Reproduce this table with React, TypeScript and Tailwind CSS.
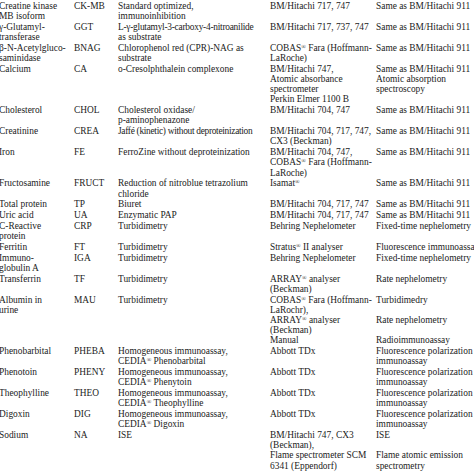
const R = () => <span className="text-[6px] align-top leading-none relative top-[1px]">®</span>;

type Cell = (string | JSX.Element)[];
type Row = [Cell, Cell, Cell, Cell, Cell];

const fp: Cell = ["Fluorescence polarization", "immunoassay"];
const same: Cell = ["Same as BM/Hitachi 911"];

const rows: Row[] = [
  [["Creatine kinase", "MB isoform"], ["CK-MB"], ["Standard optimized,", "immunoinhibition"], ["BM/Hitachi 717, 747"], same],
  [["γ-Glutamyl-", "transferase"], ["GGT"], [<span className="tracking-[-0.25px]">L-γ-glutamyl-3-carboxy-4-nitroanilide</span>, "as substrate"], ["BM/Hitachi 717, 737, 747"], same],
  [["β-N-Acetylgluco-", "saminidase"], ["BNAG"], ["Chlorophenol red (CPR)-NAG as", "substrate"], [<>COBAS<R /> Fara (Hoffmann-</>, "LaRoche)"], same],
  [["Calcium"], ["CA"], ["o-Cresolphthalein complexone"], ["BM/Hitachi 747,", "Atomic absorbance", "spectrometer", "Perkin Elmer 1100 B"], ["Same as BM/Hitachi 911", "Atomic absorption", "spectroscopy"]],
  [["Cholesterol"], ["CHOL"], ["Cholesterol oxidase/", "p-aminophenazone"], ["BM/Hitachi 704, 747"], same],
  [["Creatinine"], ["CREA"], [<span className="tracking-[-0.3px]">Jaffé (kinetic) without deproteinization</span>], ["BM/Hitachi 704, 717, 747,", "CX3 (Beckman)"], same],
  [["Iron"], ["FE"], ["FerroZine without deproteinization"], ["BM/Hitachi 704, 747,", <>COBAS<R /> Fara (Hoffmann-</>, "LaRoche)"], same],
  [["Fructosamine"], ["FRUCT"], ["Reduction of nitroblue tetrazolium", "chloride"], [<>Isamat<R /></>], same],
  [["Total protein"], ["TP"], ["Biuret"], ["BM/Hitachi 704, 717, 747"], same],
  [["Uric acid"], ["UA"], ["Enzymatic PAP"], ["BM/Hitachi 704, 717, 747"], same],
  [["C-Reactive", "protein"], ["CRP"], ["Turbidimetry"], ["Behring Nephelometer"], ["Fixed-time nephelometry"]],
  [["Ferritin"], ["FT"], ["Turbidimetry"], [<>Stratus<R /> II analyser</>], ["Fluorescence immunoassay"]],
  [["Immuno-", "globulin A"], ["IGA"], ["Turbidimetry"], ["Behring Nephelometer"], ["Fixed-time nephelometry"]],
  [["Transferrin"], ["TF"], ["Turbidimetry"], [<>ARRAY<R /> analyser</>, "(Beckman)"], ["Rate nephelometry"]],
  [["Albumin in", "urine"], ["MAU"], ["Turbidimetry"], [<>COBAS<R /> Fara (Hoffmann-</>, "LaRochr),", <>ARRAY<R /> analyser</>, "(Beckman)", "Manual"], ["Turbidimedry", "", "Rate nephelometry", "", "Radioimmunoassay"]],
  [["Phenobarbital"], ["PHEBA"], ["Homogeneous immunoassay,", <>CEDIA<R /> Phenobarbital</>], ["Abbott TDx"], fp],
  [["Phenotoin"], ["PHENY"], ["Homogeneous immunoassay,", <>CEDIA<R /> Phenytoin</>], ["Abbott TDx"], fp],
  [["Theophylline"], ["THEO"], ["Homogeneous immunoassay,", <>CEDIA<R /> Theophylline</>], ["Abbott TDx"], fp],
  [["Digoxin"], ["DIG"], ["Homogeneous immunoassay,", <>CEDIA<R /> Digoxin</>], ["Abbott TDx"], fp],
  [["Sodium"], ["NA"], ["ISE"], ["BM/Hitachi 747, CX3", "(Beckman),", "Flame spectrometer SCM", "6341 (Eppendorf)"], ["ISE", "", "Flame atomic emission", "spectrometry"]],
];

const CellLines = ({ lines }: { lines: Cell }) => (
  <div className="flex flex-col whitespace-nowrap">
    {lines.map((l, i) => (
      <div key={i} className="h-[10.2px]">{l}</div>
    ))}
  </div>
);

export default function App() {
  return (
    <div
      className="w-[474px] h-[474px] overflow-hidden bg-white text-[#222] text-[9.4px] leading-[10.2px]"
      style={{ fontFamily: '"Liberation Serif", "Times New Roman", serif' }}
    >
      <div className="ml-[-1px] pt-[1px] flex flex-col">
        {rows.map((r, i) => (
          <div key={i} className="grid grid-cols-[75px_44px_152px_106px_1fr] pb-[0.6px]">
            {r.map((c, j) => (
              <CellLines key={j} lines={c} />
            ))}
          </div>
        ))}
      </div>
    </div>
  );
}
